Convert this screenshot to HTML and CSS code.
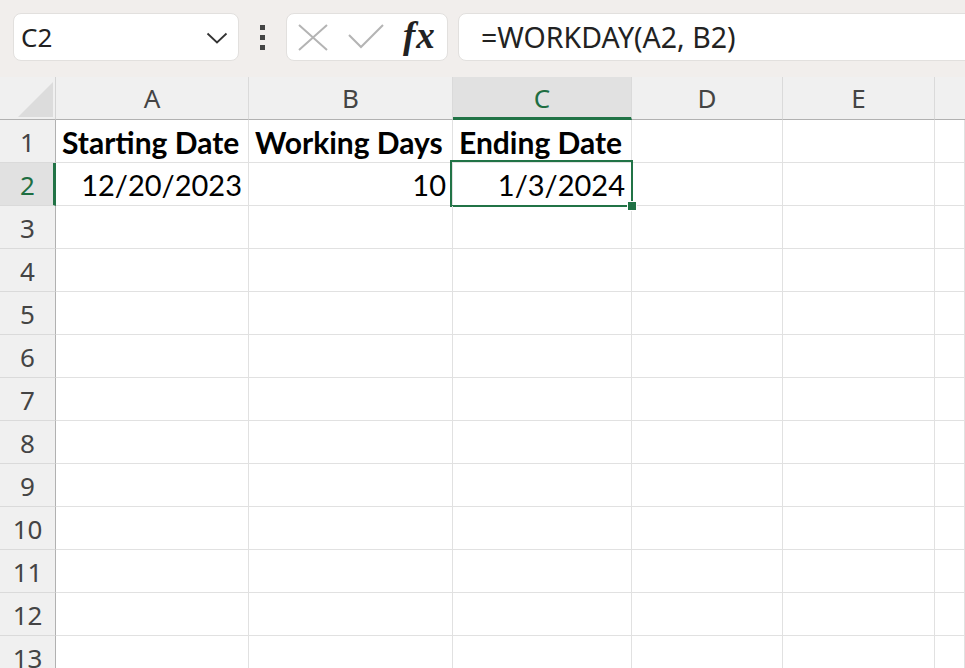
FILE: index.html
```html
<!DOCTYPE html>
<html>
<head>
<meta charset="utf-8">
<link rel="stylesheet" href="styles.css">
</head>
<body>
<div class="toolbar">
  <div class="namebox">
    <span class="name">C2</span>
    <svg class="chev" width="22" height="12" viewBox="0 0 22 12"><path d="M1.5 1.5 L11 10.5 L20.5 1.5" fill="none" stroke="#333" stroke-width="1.8"/></svg>
  </div>
  <div class="dots"><i></i><i></i><i></i></div>
  <div class="funcbox">
    <svg class="ico-x" width="30" height="27" viewBox="0 0 30 27"><path d="M1 1 L29 26 M29 1 L1 26" stroke="#b4b4b4" stroke-width="2" fill="none"/></svg>
    <svg class="ico-check" width="36" height="25" viewBox="0 0 36 25"><path d="M1 11 L13 23 L35 1" stroke="#b4b4b4" stroke-width="2" fill="none"/></svg>
    <span class="fx">fx</span>
  </div>
  <div class="formula">=WORKDAY(A2, B2)</div>
</div>
<div class="sheet">
  <div class="corner"><div class="tri"></div></div>
  <div class="ch">A</div>
  <div class="ch">B</div>
  <div class="ch sel">C</div>
  <div class="ch">D</div>
  <div class="ch">E</div>
  <div class="ch last"></div>

  <div class="rh">1</div>
  <div class="c b">Starting Date</div>
  <div class="c b">Working Days</div>
  <div class="c b">Ending Date</div>
  <div class="c"></div><div class="c"></div><div class="c"></div>

  <div class="rh sel">2</div>
  <div class="c r">12/20/2023</div>
  <div class="c r">10</div>
  <div class="c r active">1/3/2024<span class="handle"></span></div>
  <div class="c"></div><div class="c"></div><div class="c"></div>

  <div class="rh">3</div><div class="c"></div><div class="c"></div><div class="c"></div><div class="c"></div><div class="c"></div><div class="c"></div>
  <div class="rh">4</div><div class="c"></div><div class="c"></div><div class="c"></div><div class="c"></div><div class="c"></div><div class="c"></div>
  <div class="rh">5</div><div class="c"></div><div class="c"></div><div class="c"></div><div class="c"></div><div class="c"></div><div class="c"></div>
  <div class="rh">6</div><div class="c"></div><div class="c"></div><div class="c"></div><div class="c"></div><div class="c"></div><div class="c"></div>
  <div class="rh">7</div><div class="c"></div><div class="c"></div><div class="c"></div><div class="c"></div><div class="c"></div><div class="c"></div>
  <div class="rh">8</div><div class="c"></div><div class="c"></div><div class="c"></div><div class="c"></div><div class="c"></div><div class="c"></div>
  <div class="rh">9</div><div class="c"></div><div class="c"></div><div class="c"></div><div class="c"></div><div class="c"></div><div class="c"></div>
  <div class="rh">10</div><div class="c"></div><div class="c"></div><div class="c"></div><div class="c"></div><div class="c"></div><div class="c"></div>
  <div class="rh">11</div><div class="c"></div><div class="c"></div><div class="c"></div><div class="c"></div><div class="c"></div><div class="c"></div>
  <div class="rh">12</div><div class="c"></div><div class="c"></div><div class="c"></div><div class="c"></div><div class="c"></div><div class="c"></div>
  <div class="rh">13</div><div class="c"></div><div class="c"></div><div class="c"></div><div class="c"></div><div class="c"></div><div class="c"></div>
</div>
</body>
</html>
```

FILE: styles.css
```css
html, body {
  margin: 0;
  padding: 0;
  width: 965px;
  height: 668px;
  overflow: hidden;
  background: #fff;
}
.toolbar {
  height: 77px;
  box-sizing: border-box;
  background: #f1eeec;
  display: flex;
  align-items: center;
  padding: 0 0 3px 13px;
  font-family: "Noto Sans", "Open Sans", sans-serif;
  color: #222;
}
.namebox {
  width: 226px;
  height: 48px;
  box-sizing: border-box;
  background: #fff;
  border: 1px solid #e2e0de;
  border-radius: 8px;
  display: flex;
  align-items: center;
  justify-content: space-between;
  padding: 0 10px 0 7px;
  flex: none;
}
.name {
  font-size: 26px;
  color: #222;
  margin-top: -1px;
}
.chev { margin-top: 2px; }
.dots {
  width: 47px;
  display: flex;
  flex-direction: column;
  align-items: center;
  gap: 5px;
  flex: none;
}
.dots i {
  display: block;
  width: 5px;
  height: 5px;
  background: #444;
}
.funcbox {
  width: 162px;
  height: 48px;
  box-sizing: border-box;
  background: #fff;
  border: 1px solid #e2e0de;
  border-radius: 8px;
  display: flex;
  align-items: center;
  padding: 0 0 0 11px;
  flex: none;
}
.ico-x { margin-top: 1px; }
.ico-check { margin-left: 20px; margin-top: -1px; }
.fx {
  font-family: "Liberation Serif", "DejaVu Serif", serif;
  font-style: italic;
  font-weight: bold;
  font-size: 37px;
  color: #222;
  margin-left: 19px;
  margin-top: -3px;
  letter-spacing: 1px;
}
.formula {
  flex: none;
  width: 540px;
  height: 48px;
  margin-left: 10px;
  box-sizing: border-box;
  background: #fff;
  border: 1px solid #e2e0de;
  border-radius: 8px;
  display: flex;
  align-items: center;
  padding-left: 22px;
  font-size: 28.5px;
  color: #222;
}
.sheet {
  display: grid;
  grid-template-columns: 56px 193px 204px 179px 151px 152px 30px;
  grid-template-rows: 43px;
  grid-auto-rows: 43px;
  font-family: "Noto Sans", "Open Sans", sans-serif;
}
.corner {
  background: #f0f0f0;
  border-right: 1px solid #d4d4d4;
  border-bottom: 1px solid #b1b1b1;
  position: relative;
}
.tri {
  position: absolute;
  left: 18px;
  top: 5px;
  width: 35px;
  height: 35px;
  background: #dcdcdc;
  clip-path: polygon(100% 0, 100% 100%, 0 100%);
}
.ch {
  background: #f0f0f0;
  border-right: 1px solid #dadada;
  border-bottom: 1px solid #b1b1b1;
  display: flex;
  align-items: center;
  justify-content: center;
  font-size: 26px;
  color: #444;
  padding-bottom: 1px;
}
.ch.sel {
  background: #e1e1e1;
  color: #1e6e42;
  border-bottom: 3px solid #217346;
  padding-bottom: 0;
  padding-top: 1px;
}
.ch.last { border-right: none; }
.rh {
  background: #f0f0f0;
  border-right: 1px solid #b1b1b1;
  border-bottom: 1px solid #dadada;
  display: flex;
  align-items: center;
  justify-content: center;
  font-size: 26px;
  color: #444;
  padding-top: 2px;
}
.rh.sel {
  background: #e1e1e1;
  color: #1e6e42;
  border-right: 3px solid #217346;
  padding-left: 2px;
}
.c {
  border-right: 1px solid #e1e1e1;
  border-bottom: 1px solid #e1e1e1;
  font-family: Lato, "Liberation Sans", sans-serif;
  font-size: 29px;
  line-height: 36px;
  color: #000;
  display: flex;
  align-items: flex-end;
  padding: 0 6px 2px 6px;
  white-space: nowrap;
  position: relative;
}
.c.b { font-weight: bold; font-size: 30px; }
.c.r { justify-content: flex-end; padding-right: 6px; }
.active::after {
  content: "";
  position: absolute;
  left: -3px;
  top: -3px;
  right: -2px;
  bottom: -2px;
  border: 2px solid #217346;
}
.handle {
  position: absolute;
  right: -6px;
  bottom: -6px;
  width: 8px;
  height: 8px;
  background: #217346;
  border: 1px solid #fff;
  z-index: 2;
}
```
